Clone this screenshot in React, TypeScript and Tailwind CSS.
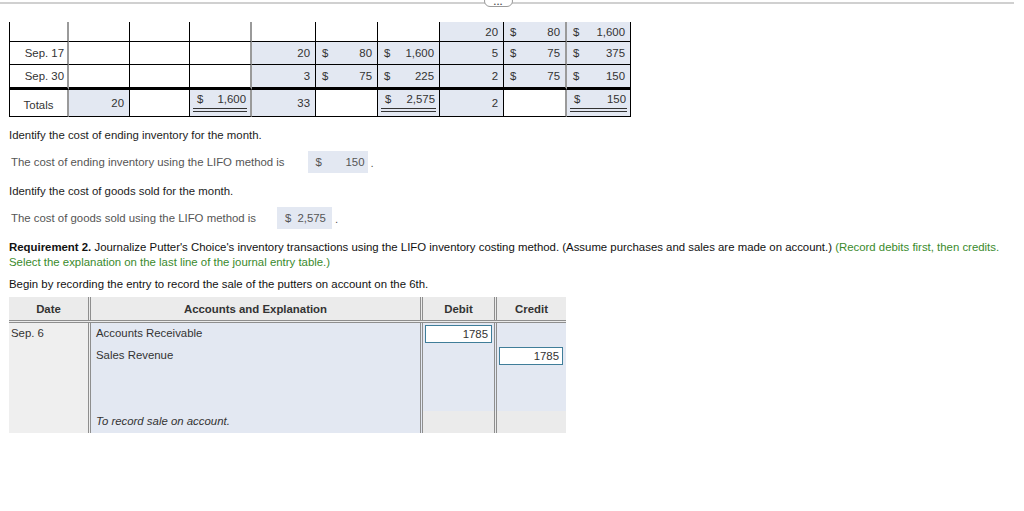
import React from "react";

const BLUE = "bg-[#e3e8f2]";

type Cell = {
  kind?: "num" | "amt" | "tot" | "date" | "label";
  value?: string;
  blue?: boolean;
};

// column widths / right borders of the inventory table
const cols = [
  { w: "w-[59px]", border: "border-r-2 border-r-[#9a9a9a]" },
  { w: "w-[61px]", border: "border-r border-r-black" },
  { w: "w-[60px]", border: "border-r border-r-black" },
  { w: "w-[62px]", border: "border-r-2 border-r-[#9a9a9a]" },
  { w: "w-[64px]", border: "border-r border-r-black" },
  { w: "w-[62px]", border: "border-r border-r-black" },
  { w: "w-[62px]", border: "border-r border-r-black" },
  { w: "w-[64px]", border: "border-r border-r-black" },
  { w: "w-[63px]", border: "border-r-2 border-r-[#9a9a9a]" },
  { w: "w-[64px]", border: "border-r border-r-black" },
];

type Row = { h: string; bottom: string; cells: (Cell | null)[] };

const rows: Row[] = [
  {
    h: "h-[20px]",
    bottom: "border-b border-b-black",
    cells: [
      null, null, null, null, null, null, null,
      { kind: "num", value: "20", blue: true },
      { kind: "amt", value: "80", blue: true },
      { kind: "amt", value: "1,600", blue: true },
    ],
  },
  {
    h: "h-[23px]",
    bottom: "border-b border-b-black",
    cells: [
      { kind: "date", value: "Sep. 17" },
      null, null, null,
      { kind: "num", value: "20", blue: true },
      { kind: "amt", value: "80", blue: true },
      { kind: "amt", value: "1,600", blue: true },
      { kind: "num", value: "5", blue: true },
      { kind: "amt", value: "75", blue: true },
      { kind: "amt", value: "375", blue: true },
    ],
  },
  {
    h: "h-[25px]",
    bottom: "border-b-[3px] border-b-black",
    cells: [
      { kind: "date", value: "Sep. 30" },
      null, null, null,
      { kind: "num", value: "3", blue: true },
      { kind: "amt", value: "75", blue: true },
      { kind: "amt", value: "225", blue: true },
      { kind: "num", value: "2", blue: true },
      { kind: "amt", value: "75", blue: true },
      { kind: "amt", value: "150", blue: true },
    ],
  },
  {
    h: "h-[27px]",
    bottom: "border-b border-b-black",
    cells: [
      { kind: "label", value: "Totals" },
      { kind: "num", value: "20", blue: true },
      null,
      { kind: "tot", value: "1,600", blue: true },
      { kind: "num", value: "33", blue: true },
      null,
      { kind: "tot", value: "2,575", blue: true },
      { kind: "num", value: "2", blue: true },
      null,
      { kind: "tot", value: "150", blue: true },
    ],
  },
];

function InvCell({ c, i, bottom }: { c: Cell | null; i: number; bottom: string }) {
  const col = cols[i];
  const base = `${col.w} ${col.border} ${bottom} shrink-0 ${c?.blue ? BLUE : "bg-white"}`;
  if (!c) return <div className={base} />;
  if (c.kind === "date")
    return <div className={`${base} flex items-center justify-end pr-[3px]`}>{c.value}</div>;
  if (c.kind === "label")
    return <div className={`${base} flex items-center justify-center pt-[3px]`}>{c.value}</div>;
  if (c.kind === "num")
    return <div className={`${base} flex items-center justify-end pr-[5px]`}>{c.value}</div>;
  if (c.kind === "amt")
    return (
      <div className={`${base} flex items-center justify-between pl-[6px] pr-[5px]`}>
        <span>$</span>
        <span>{c.value}</span>
      </div>
    );
  return (
    <div className={`${base} pt-[1px]`}>
      <div className="mx-[3px] flex h-[21px] items-center justify-between border-b-4 border-double border-b-[#333] pl-[4px] pr-[1px] pb-[2px]">
        <span>$</span>
        <span>{c.value}</span>
      </div>
    </div>
  );
}

function JRow({
  date,
  account,
  italic,
  last,
  debit,
  credit,
}: {
  date?: string;
  account?: string;
  italic?: boolean;
  last?: boolean;
  debit?: string;
  credit?: string;
}) {
  const side = last ? "bg-[#ebebeb]" : BLUE;
  const sep = "border-r-[3px] border-double border-r-[#8e8e8e]";
  return (
    <div className="flex h-[22px]">
      <div className={`w-[82px] shrink-0 ${sep} bg-[#efefef] pl-[2px] pt-[3px]`}>{date}</div>
      <div className={`w-[332px] shrink-0 ${sep} ${BLUE} pl-[5px] pt-[3px] ${italic ? "italic" : ""}`}>
        {account}
      </div>
      <div className={`w-[74px] shrink-0 ${sep} ${side} pl-[2px] pt-[2px]`}>
        {debit && (
          <div className="flex h-[18px] w-[67px] items-center justify-end border border-[#3f7d99] bg-white pr-[3px]">
            {debit}
          </div>
        )}
      </div>
      <div className={`w-[69px] shrink-0 ${side} pl-[2px] pt-[2px]`}>
        {credit && (
          <div className="flex h-[18px] w-[64px] items-center justify-end border border-[#3f7d99] bg-white pr-[3px]">
            {credit}
          </div>
        )}
      </div>
    </div>
  );
}

export default function App() {
  return (
    <div
      className="h-[511px] w-[1024px] overflow-hidden bg-white text-[11.4px] leading-[14px] text-[#222]"
      style={{ fontFamily: '"Liberation Sans", Arial, sans-serif' }}
    >
      {/* divider with collapsed-content pill */}
      <div className="relative h-[22px]">
        <div className="absolute left-0 top-[2px] h-[2px] w-[1014px] bg-[#d0d0d0]" />
        <div className="absolute left-[484px] top-[-5px] flex h-[12px] w-[29px] items-center justify-center rounded-full border border-[#9a9a9a] bg-white pt-[5px] text-[6px] leading-[6px] tracking-[1px] text-[#555]">
          •••
        </div>
      </div>

      {/* inventory record */}
      <div className="ml-[9px] flex w-fit flex-col border-l border-l-black text-[#333]">
        {rows.map((r, ri) => (
          <div key={ri} className={`flex ${r.h}`}>
            {r.cells.map((c, i) => (
              <InvCell key={i} c={c} i={i} bottom={r.bottom} />
            ))}
          </div>
        ))}
      </div>

      <div className="pl-[9px]">
        <p className="mt-[11px]">Identify the cost of ending inventory for the month.</p>
        <div className="mt-[9px] flex h-[22px] items-center pl-[2px] text-[#555]">
          <span>The cost of ending inventory using the LIFO method is</span>
          <span className={`ml-[23px] flex h-[22px] w-[60px] items-center justify-between ${BLUE} pl-[8px] pr-[3px]`}>
            <span>$</span>
            <span>150</span>
          </span>
          <span className="ml-[3px] self-end pb-[3px]">.</span>
        </div>

        <p className="mt-[11px]">Identify the cost of goods sold for the month.</p>
        <div className="mt-[9px] flex h-[22px] items-center pl-[2px] text-[#555]">
          <span>The cost of goods sold using the LIFO method is</span>
          <span className={`ml-[21px] flex h-[22px] w-[55px] items-center gap-[6px] ${BLUE} pl-[8px]`}>
            <span>$</span>
            <span>2,575</span>
          </span>
          <span className="ml-[3px] self-end pb-[3px]">.</span>
        </div>

        <p className="mt-[11px] leading-[15px] text-[#111]">
          <span className="font-bold">Requirement 2.</span> Journalize Putter's Choice's inventory transactions using
          the LIFO inventory costing method. (Assume purchases and sales are made on account.){" "}
          <span className="text-[#3a8a2c]">
            (Record debits first, then credits.
            <br />
            Select the explanation on the last line of the journal entry table.)
          </span>
        </p>
        <p className="mt-[7px] text-[#111]">Begin by recording the entry to record the sale of the putters on account on the 6th.</p>

        {/* journal entry table */}
        <div className="mt-[6px] w-fit text-[#333]">
          <div className="flex h-[26px] border-b-[3px] border-double border-b-[#8e8e8e] bg-[#ebebeb] font-bold">
            <div className="flex w-[82px] shrink-0 items-center justify-center border-r-[3px] border-double border-r-[#8e8e8e]">
              Date
            </div>
            <div className="flex w-[332px] shrink-0 items-center justify-center border-r-[3px] border-double border-r-[#8e8e8e]">
              Accounts and Explanation
            </div>
            <div className="flex w-[74px] shrink-0 items-center justify-center border-r-[3px] border-double border-r-[#8e8e8e]">
              Debit
            </div>
            <div className="flex w-[69px] shrink-0 items-center justify-center">Credit</div>
          </div>
          <JRow date="Sep. 6" account="Accounts Receivable" debit="1785" />
          <JRow account="Sales Revenue" credit="1785" />
          <JRow />
          <JRow />
          <JRow account="To record sale on account." italic last />
        </div>
      </div>
    </div>
  );
}
